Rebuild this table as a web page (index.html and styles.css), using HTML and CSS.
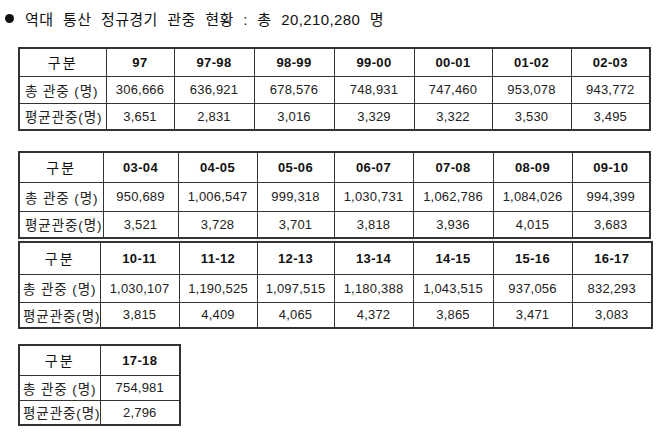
FILE: index.html
```html
<!DOCTYPE html>
<html lang="ko">
<head>
<meta charset="utf-8">
<link rel="stylesheet" href="styles.css">
</head>
<body>
<div class="page">
  <div class="title"><span class="dot"></span><span class="title-text">역대 통산 정규경기 관중 현황 : 총 20,210,280 명</span></div>

  <table class="stat t1">
    <colgroup><col class="c1"><col class="c2"><col class="c3"><col class="c4"><col class="c5"><col class="c6"><col class="c7"><col class="c8"></colgroup>
    <tr class="hd"><th class="lab">구분</th><th>97</th><th>97-98</th><th>98-99</th><th>99-00</th><th>00-01</th><th>01-02</th><th>02-03</th></tr>
    <tr class="r2"><td class="lab lt">총 관중 (명)</td><td>306,666</td><td>636,921</td><td>678,576</td><td>748,931</td><td>747,460</td><td>953,078</td><td>943,772</td></tr>
    <tr class="r3"><td class="lab lt">평균관중(명)</td><td>3,651</td><td>2,831</td><td>3,016</td><td>3,329</td><td>3,322</td><td>3,530</td><td>3,495</td></tr>
  </table>

  <table class="stat t2">
    <colgroup><col class="c1"><col class="c2"><col class="c3"><col class="c4"><col class="c5"><col class="c6"><col class="c7"><col class="c8"></colgroup>
    <tr class="hd"><th class="lab">구분</th><th>03-04</th><th>04-05</th><th>05-06</th><th>06-07</th><th>07-08</th><th>08-09</th><th>09-10</th></tr>
    <tr class="r2"><td class="lab lt">총 관중 (명)</td><td>950,689</td><td>1,006,547</td><td>999,318</td><td>1,030,731</td><td>1,062,786</td><td>1,084,026</td><td>994,399</td></tr>
    <tr class="r3"><td class="lab lt">평균관중(명)</td><td>3,521</td><td>3,728</td><td>3,701</td><td>3,818</td><td>3,936</td><td>4,015</td><td>3,683</td></tr>
  </table>

  <table class="stat t3">
    <colgroup><col class="c1"><col class="c2"><col class="c3"><col class="c4"><col class="c5"><col class="c6"><col class="c7"><col class="c8"></colgroup>
    <tr class="hd"><th class="lab">구분</th><th>10-11</th><th>11-12</th><th>12-13</th><th>13-14</th><th>14-15</th><th>15-16</th><th>16-17</th></tr>
    <tr class="r2"><td class="lab lt"><div class="clip">총 관중 (명)</div></td><td>1,030,107</td><td>1,190,525</td><td>1,097,515</td><td>1,180,388</td><td>1,043,515</td><td>937,056</td><td>832,293</td></tr>
    <tr class="r3"><td class="lab lt"><div class="clip">평균관중(명)</div></td><td>3,815</td><td>4,409</td><td>4,065</td><td>4,372</td><td>3,865</td><td>3,471</td><td>3,083</td></tr>
  </table>

  <table class="stat t4">
    <colgroup><col class="c1"><col class="c2"></colgroup>
    <tr class="hd"><th class="lab">구분</th><th>17-18</th></tr>
    <tr class="r2"><td class="lab lt"><div class="clip">총 관중 (명)</div></td><td>754,981</td></tr>
    <tr class="r3"><td class="lab lt"><div class="clip">평균관중(명)</div></td><td>2,796</td></tr>
  </table>
</div>
</body>
</html>
```

FILE: styles.css
```css
html, body {
  margin: 0;
  padding: 0;
  background: #ffffff;
}

.page {
  width: 658px;
  height: 433px;
  overflow: hidden;
  font-family: "Liberation Sans", "Noto Sans CJK KR", sans-serif;
  color: #111;
}

.title {
  display: flex;
  align-items: center;
  height: 20px;
  margin-top: 8px;
  padding-left: 5px;
}

.dot {
  width: 9px;
  height: 9px;
  border-radius: 50%;
  background: #111;
  margin-right: 11px;
}

.title-text {
  font-size: 15px;
  word-spacing: 5px;
  letter-spacing: 0.4px;
  color: #111;
}

.stat {
  border-collapse: collapse;
  table-layout: fixed;
  margin-left: 18px;
  border: 2px solid #333;
  font-size: 13px;
}

.stat th,
.stat td {
  border: 1px solid #333;
  padding: 0;
  text-align: center;
  white-space: nowrap;
  overflow: hidden;
}

.stat th {
  font-weight: bold;
  letter-spacing: 0.4px;
}

.stat th.lab {
  font-weight: normal;
  font-size: 14px;
  letter-spacing: 2px;
}

.stat td.lt {
  text-align: left;
  padding-left: 5px;
  font-size: 13.5px;
  letter-spacing: 0.9px;
}

.clip {
  overflow: hidden;
  white-space: nowrap;
}

.stat td {
  color: #222;
  letter-spacing: 0.2px;
}

/* table 1 */
.t1 { width: 631px; margin-top: 19px; }
.t1 .c1 { width: 87px; }
.t1 .c2 { width: 68px; }
.t1 .c3 { width: 80px; }
.t1 .c4 { width: 80px; }
.t1 .c5 { width: 80px; }
.t1 .c6 { width: 78px; }
.t1 .c7 { width: 79px; }
.t1 .c8 { width: 79px; }
.t1 .hd { height: 28px; }
.t1 .r2 { height: 27px; }
.t1 .r3 { height: 27px; }

/* table 2 */
.t2 { width: 631px; margin-top: 20px; }
.t2 .c1 { width: 84px; }
.t2 .c2 { width: 75px; }
.t2 .c3 { width: 79px; }
.t2 .c4 { width: 77px; }
.t2 .c5 { width: 79px; }
.t2 .c6 { width: 80px; }
.t2 .c7 { width: 79px; }
.t2 .c8 { width: 78px; }
.t2 .hd { height: 30px; }
.t2 .r2 { height: 29px; }
.t2 .r3 { height: 27px; }

/* table 3 */
.t3 { width: 633px; margin-top: 2px; }
.t3 .c1 { width: 81px; }
.t3 .c2 { width: 79px; }
.t3 .c3 { width: 78px; }
.t3 .c4 { width: 77px; }
.t3 .c5 { width: 79px; }
.t3 .c6 { width: 80px; }
.t3 .c7 { width: 79px; }
.t3 .c8 { width: 80px; }
.t3 .hd { height: 32px; }
.t3 .r2 { height: 28px; }
.t3 .r3 { height: 26px; }
.t3 td.lt, .t4 td.lt { padding-left: 3px; padding-right: 0; }

/* table 4 */
.t4 { width: 161px; margin-top: 15px; }
.t4 .c1 { width: 81px; }
.t4 .c2 { width: 80px; }
.t4 .hd { height: 30px; }
.t4 .r2 { height: 25px; }
.t4 .r3 { height: 25px; }
```
